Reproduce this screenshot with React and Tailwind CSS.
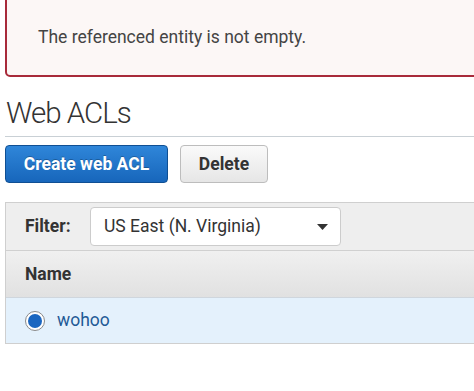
export default function App() {
  return (
    <div className="w-[474px] h-[391px] overflow-hidden bg-white" style={{ fontFamily: "Roboto, 'Liberation Sans', sans-serif" }}>
      <div className="ml-[5px] -mt-[4px] w-[480px] h-[81px] rounded-[5px] border-2 border-[#a82a3a] bg-[#fcf7f6] pl-[31px] pt-[26px] text-[17.5px] text-[#444]">
        The referenced entity is not empty.
      </div>
      <h1 className="ml-[6px] mt-[16px] text-[29.5px] leading-[40px] font-light text-[#333] tracking-[-1px]">Web ACLs</h1>
      <div className="mt-[3px] ml-[5px] h-px bg-[#c9d0d5]" />
      <div className="flex gap-[12px] ml-[5px] mt-[8px]">
        <button className="h-[38px] w-[163px] rounded-[4px] border border-[#0f4f93] bg-gradient-to-b from-[#2f86d9] to-[#1766bb] text-[17.5px] font-bold text-white [text-shadow:0_-1px_0_rgba(0,0,0,0.25)]">
          Create web ACL
        </button>
        <button className="h-[38px] w-[88px] rounded-[4px] border border-[#bdbdbd] bg-gradient-to-b from-[#fafafa] to-[#e6e6e6] text-[17.5px] font-bold text-[#333]">
          Delete
        </button>
      </div>
      <div className="ml-[5px] mt-[19px] w-[480px] border border-[#cfcfcf]">
        <div className="flex items-center h-[47px] bg-[#eeeeee] pl-[19px]">
          <span className="text-[17.5px] font-bold text-[#333] w-[65px]">Filter:</span>
          <div className="flex items-center justify-between h-[39px] w-[251px] rounded-[4px] border border-[#cccccc] bg-white pl-[13px] pr-[12px] text-[17.5px] text-[#333]">
            <span>US East (N. Virginia)</span>
            <svg width="11" height="6" viewBox="0 0 11 6"><path d="M0 0h11L5.5 6z" fill="#333" /></svg>
          </div>
        </div>
        <div className="flex items-center h-[47px] border-t border-[#d0d0d0] bg-gradient-to-b from-[#f0f0f0] to-[#e1e1e1] pl-[19px] text-[17.5px] font-bold text-[#333]">
          Name
        </div>
        <div className="flex items-center h-[46px] border-t border-[#cfd6dd] bg-[#e4f1fc] pl-[19px]">
          <span className="flex items-center justify-center w-[20px] h-[20px] rounded-full border border-[#8a8a8a] bg-white">
            <span className="w-[14px] h-[14px] rounded-full bg-[#1a66c0]" />
          </span>
          <span className="ml-[12px] text-[17.5px] text-[#1f5a96]">wohoo</span>
        </div>
      </div>
    </div>
  );
}
